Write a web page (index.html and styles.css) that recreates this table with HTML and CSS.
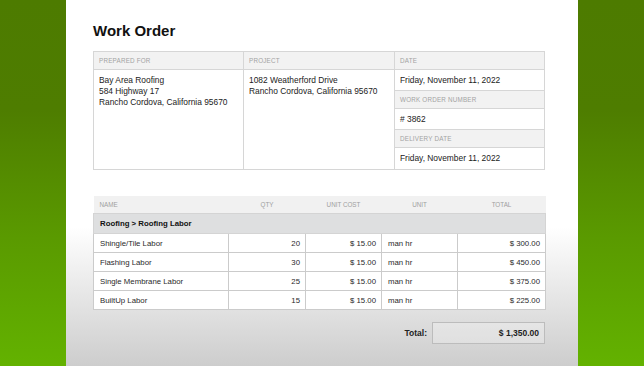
FILE: index.html
```html
<!DOCTYPE html>
<html lang="en">
<head>
    <meta charset="UTF-8">
    <title>Work Order</title>
    <link rel="stylesheet" href="styles.css">
</head>
<body>
    <div class="sheet">
        <h1>Work Order</h1>

        <div class="info">
            <div class="col">
                <div class="label">Prepared For</div>
                <div class="value grow">Bay Area Roofing<br>584 Highway 17<br>Rancho Cordova, California 95670</div>
            </div>
            <div class="col">
                <div class="label">Project</div>
                <div class="value grow">1082 Weatherford Drive<br>Rancho Cordova, California 95670</div>
            </div>
            <div class="col last">
                <div class="label">Date</div>
                <div class="value">Friday, November 11, 2022</div>
                <div class="label">Work Order Number</div>
                <div class="value"># 3862</div>
                <div class="label">Delivery Date</div>
                <div class="value">Friday, November 11, 2022</div>
            </div>
        </div>

        <table class="items">
            <colgroup>
                <col class="c-name">
                <col class="c-qty">
                <col class="c-cost">
                <col class="c-unit">
                <col class="c-total">
            </colgroup>
            <thead>
                <tr>
                    <th class="left">Name</th>
                    <th>Qty</th>
                    <th>Unit Cost</th>
                    <th>Unit</th>
                    <th>Total</th>
                </tr>
            </thead>
            <tbody>
                <tr class="category"><td colspan="5">Roofing &gt; Roofing Labor</td></tr>
                <tr><td>Shingle/Tile Labor</td><td class="num">20</td><td class="num">$ 15.00</td><td>man hr</td><td class="num">$ 300.00</td></tr>
                <tr><td>Flashing Labor</td><td class="num">30</td><td class="num">$ 15.00</td><td>man hr</td><td class="num">$ 450.00</td></tr>
                <tr><td>Single Membrane Labor</td><td class="num">25</td><td class="num">$ 15.00</td><td>man hr</td><td class="num">$ 375.00</td></tr>
                <tr><td>BuiltUp Labor</td><td class="num">15</td><td class="num">$ 15.00</td><td>man hr</td><td class="num">$ 225.00</td></tr>
            </tbody>
        </table>

        <div class="totals">
            <span class="total-label">Total:</span>
            <span class="total-box">$ 1,350.00</span>
        </div>
    </div>
</body>
</html>
```

FILE: styles.css
```css
html, body {
    margin: 0;
    height: 100%;
}
body {
    font-family: "Liberation Sans", Arial, sans-serif;
    color: #222;
    background: linear-gradient(to bottom, #4d7b00 0%, #4e7d00 30%, #5a9a00 65%, #63b200 100%);
    overflow: hidden;
}
.sheet {
    width: 512px;
    min-height: 100%;
    box-sizing: border-box;
    margin-left: 66px;
    padding: 22px 33px 0 27px;
    background: linear-gradient(to bottom, #fff 0%, #fff 62%, #cdcdcd 100%);
}
h1 {
    font-size: 15px;
    line-height: 18px;
    margin: 0 0 11px;
    color: #111;
}

/* header block: two address columns plus stacked details */
.info {
    display: grid;
    grid-template-columns: 150px 151px 149px;
    border: 1px solid #d6d6d6;
    border-bottom: none;
    font-size: 8.4px;
    line-height: 11px;
}
.col {
    display: flex;
    flex-direction: column;
    border-right: 1px solid #d6d6d6;
}
.col.last {
    border-right: none;
}
.label {
    height: 17px;
    line-height: 17px;
    padding: 0 5px;
    background: #f2f2f2;
    border-bottom: 1px solid #d6d6d6;
    color: #a3a3a3;
    font-size: 6.3px;
    text-transform: uppercase;
    letter-spacing: 0.2px;
}
.value {
    height: 20px;
    line-height: 20px;
    padding: 0 5px;
    border-bottom: 1px solid #d6d6d6;
    background: #fff;
}
.value:last-child {
    height: 21px;
    line-height: 21px;
}
.value.grow {
    flex: 1;
    height: auto;
    line-height: 11px;
    padding: 5px 5px;
}

/* line items */
.items {
    width: 452px;
    margin-top: 26px;
    border-collapse: collapse;
    table-layout: fixed;
    font-size: 7.8px;
}
.c-name { width: 135px; }
.c-qty { width: 77px; }
.c-cost { width: 76px; }
.c-unit { width: 76px; }
.c-total { width: 88px; }
.items th {
    height: 17px;
    padding: 0 6px;
    background: #f1f1f1;
    color: #a0a0a0;
    font-weight: normal;
    font-size: 6.3px;
    text-transform: uppercase;
    text-align: center;
}
.items th.left {
    text-align: left;
}
.items td {
    height: 18px;
    padding: 0 5px 0 6px;
    background: #fff;
    border: 1px solid #cbcbcb;
    color: #2a2a2a;
}
.items td.num {
    text-align: right;
}
.items tr.category td {
    height: 19px;
    background: #dedfe0;
    border-color: #d4d4d4;
    font-weight: bold;
    color: #111;
}

.totals {
    display: flex;
    justify-content: flex-end;
    align-items: center;
    gap: 5px;
    margin-top: 12px;
    font-size: 8.5px;
    font-weight: bold;
    color: #222;
}
.total-box {
    width: 101px;
    height: 20px;
    line-height: 20px;
    padding: 0 5px;
    text-align: right;
    border: 1px solid #bcbcbc;
    background: rgba(255, 255, 255, 0.25);
}
```
